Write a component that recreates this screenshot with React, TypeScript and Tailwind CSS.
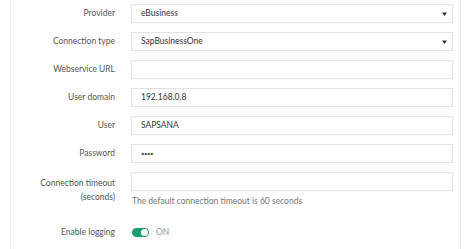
import React from 'react';

interface FieldProps {
  label: React.ReactNode;
  value?: React.ReactNode;
  select?: boolean;
}

function Field({ label, value = '', select = false }: FieldProps) {
  return (
    <div className="flex items-start h-[28px]">
      <div className="w-[104px] h-[19px] flex items-center justify-end text-right text-[#555] leading-[13px]">{label}</div>
      <div className="ml-[16px] w-[322px] h-[19px] border border-[#e2e2e2] flex items-center pl-[9px] pr-[4px] text-[#333]">
        <span className="flex-1 flex items-center">{value}</span>
        {select && (
          <svg width="5" height="4" viewBox="0 0 5 4" className="mr-[1px]">
            <path d="M0 0.5h5L2.5 4z" fill="#333" />
          </svg>
        )}
      </div>
    </div>
  );
}

export default function App() {
  return (
    <div className="w-[474px] h-[249px] bg-white overflow-hidden" style={{ fontFamily: 'Lato, "Open Sans", sans-serif' }}>
      <div className="ml-[10px] w-[451px] h-[249px] border-l border-r border-[#ececec] pt-[4px] text-[8.5px]">
        <Field label="Provider" value="eBusiness" select />
        <Field label="Connection type" value="SapBusinessOne" select />
        <Field label="Webservice URL" />
        <Field label="User domain" value="192.168.0.8" />
        <Field label="User" value="SAPSANA" />
        <Field label="Password" value={<span className="text-[6px] tracking-[-0.5px] text-[#444]">••••</span>} />
        <div className="flex items-start">
          <div className="w-[104px] pt-[4px] text-right text-[#555] leading-[14px]">
            Connection timeout
            <br />
            (seconds)
          </div>
          <div className="ml-[16px] w-[322px]">
            <div className="h-[19px] border border-[#e2e2e2]" />
            <div className="mt-[4px] text-[#777] pl-[1px]">The default connection timeout is 60 seconds</div>
          </div>
        </div>
        <div className="flex items-center mt-[18px]">
          <div className="w-[104px] text-right text-[#555]">Enable logging</div>
          <div className="ml-[17px] flex items-center">
            <div className="w-[17px] h-[9px] rounded-full bg-[#1d9b72] flex items-center justify-end pr-[1px]">
              <div className="w-[7px] h-[7px] rounded-full bg-white" />
            </div>
            <span className="ml-[7px] text-[#999]">ON</span>
          </div>
        </div>
        <div className="mt-[11px] ml-[1px] w-[440px] border-t border-[#f0f0f0]" />
      </div>
    </div>
  );
}
